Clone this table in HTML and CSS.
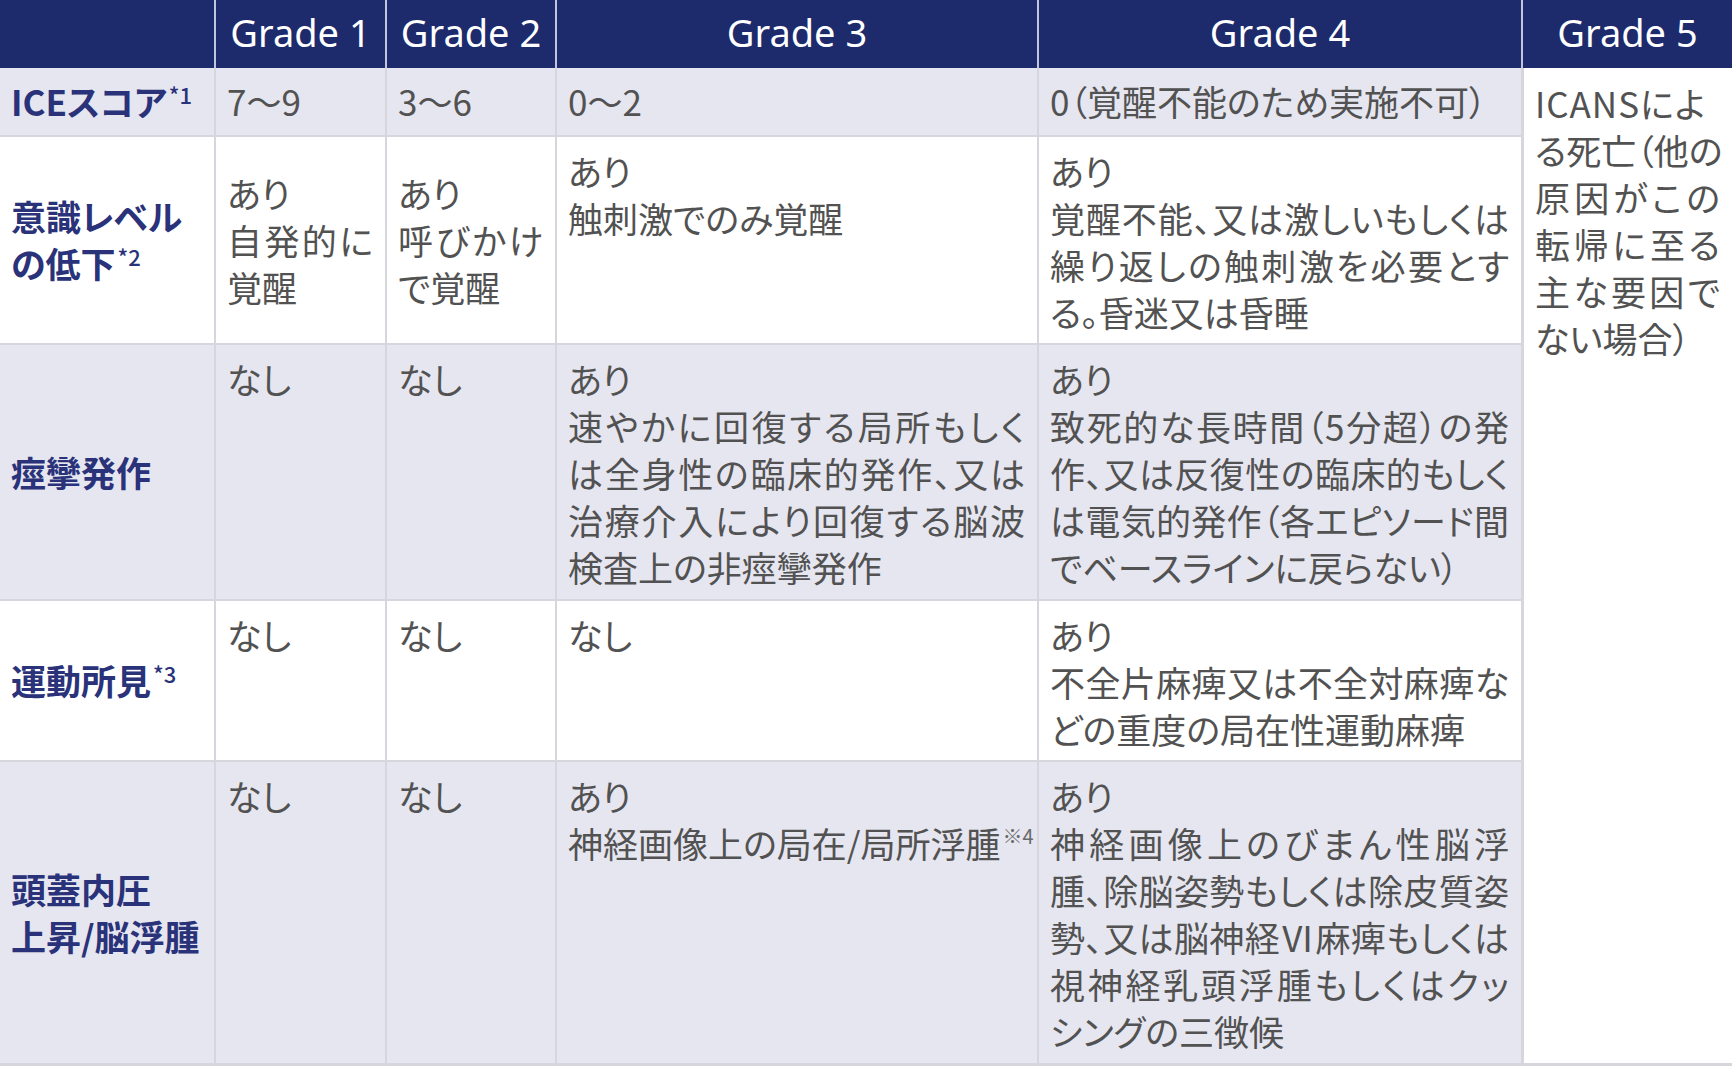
FILE: index.html
```html
<!DOCTYPE html>
<html lang="ja">
<head>
<meta charset="utf-8">
<title>ICANS Grade</title>
<link rel="stylesheet" href="styles.css">
</head>
<body>
<div class="grid">
  <div class="hd"></div>
  <div class="hd">Grade 1</div>
  <div class="hd">Grade 2</div>
  <div class="hd">Grade 3</div>
  <div class="hd">Grade 4</div>
  <div class="hd hd-last">Grade 5</div>

  <div class="c alt rh"><div class="ln">ICEスコア<sup class="sup">*1</sup></div></div>
  <div class="c alt mid"><div class="ln">7〜9</div></div>
  <div class="c alt mid"><div class="ln">3〜6</div></div>
  <div class="c alt mid"><div class="ln">0〜2</div></div>
  <div class="c alt mid"><div class="ln">0（覚醒不能のため実施不可）</div></div>
  <div class="c g5">
    <div class="ln wide">ICANSによ</div>
    <div class="ln j">る死亡（他の</div>
    <div class="ln j">原因がこの</div>
    <div class="ln j">転帰に至る</div>
    <div class="ln j">主な要因で</div>
    <div class="ln">ない場合）</div>
  </div>

  <div class="c rh"><div class="ln">意識レベル</div><div class="ln">の低下<sup class="sup">*2</sup></div></div>
  <div class="c mid"><div class="ln">あり</div><div class="ln j">自発的に</div><div class="ln">覚醒</div></div>
  <div class="c mid"><div class="ln">あり</div><div class="ln j">呼びかけ</div><div class="ln">で覚醒</div></div>
  <div class="c"><div class="ln">あり</div><div class="ln">触刺激でのみ覚醒</div></div>
  <div class="c">
    <div class="ln">あり</div>
    <div class="ln j">覚醒不能、又は激しいもしくは</div>
    <div class="ln j">繰り返しの触刺激を必要とす</div>
    <div class="ln">る。昏迷又は昏睡</div>
  </div>

  <div class="c alt rh"><div class="ln">痙攣発作</div></div>
  <div class="c alt"><div class="ln">なし</div></div>
  <div class="c alt"><div class="ln">なし</div></div>
  <div class="c alt">
    <div class="ln">あり</div>
    <div class="ln j">速やかに回復する局所もしく</div>
    <div class="ln j">は全身性の臨床的発作、又は</div>
    <div class="ln j">治療介入により回復する脳波</div>
    <div class="ln">検査上の非痙攣発作</div>
  </div>
  <div class="c alt">
    <div class="ln">あり</div>
    <div class="ln j">致死的な長時間（5分超）の発</div>
    <div class="ln j">作、又は反復性の臨床的もしく</div>
    <div class="ln j">は電気的発作（各エピソード間</div>
    <div class="ln">でベースラインに戻らない）</div>
  </div>

  <div class="c rh"><div class="ln">運動所見<sup class="sup">*3</sup></div></div>
  <div class="c"><div class="ln">なし</div></div>
  <div class="c"><div class="ln">なし</div></div>
  <div class="c"><div class="ln">なし</div></div>
  <div class="c">
    <div class="ln">あり</div>
    <div class="ln j">不全片麻痺又は不全対麻痺な</div>
    <div class="ln">どの重度の局在性運動麻痺</div>
  </div>

  <div class="c alt rh last"><div class="ln">頭蓋内圧</div><div class="ln">上昇/脳浮腫</div></div>
  <div class="c alt last"><div class="ln">なし</div></div>
  <div class="c alt last"><div class="ln">なし</div></div>
  <div class="c alt last">
    <div class="ln">あり</div>
    <div class="ln">神経画像上の局在/局所浮腫<sup class="sup4">※4</sup></div>
  </div>
  <div class="c alt last">
    <div class="ln">あり</div>
    <div class="ln j">神経画像上のびまん性脳浮</div>
    <div class="ln j">腫、除脳姿勢もしくは除皮質姿</div>
    <div class="ln j">勢、又は脳神経Ⅵ麻痺もしくは</div>
    <div class="ln j">視神経乳頭浮腫もしくはクッ</div>
    <div class="ln">シングの三徴候</div>
  </div>
</div>
</body>
</html>
```

FILE: styles.css
```css
html, body {
  margin: 0;
  padding: 0;
  background: #ffffff;
}

.grid {
  display: grid;
  grid-template-columns: 216px 171px 170px 482px 484px 209px;
  grid-template-rows: 68px 69px 208px 256px 161px 304px;
  width: 1732px;
  font-family: "Noto Sans CJK JP", "Noto Sans", sans-serif;
  font-feature-settings: "palt";
}

.hd {
  box-sizing: border-box;
  background: #1d2a6c;
  color: #ffffff;
  font-family: "Noto Sans", "Noto Sans CJK JP", sans-serif;
  font-size: 38px;
  display: flex;
  align-items: center;
  justify-content: center;
  border-right: 2px solid #c3c6da;
  white-space: nowrap;
  padding-bottom: 4px;
}

.hd-last {
  border-right: none;
}

.c {
  box-sizing: border-box;
  padding: 10px 12px 0 11px;
  font-size: 35px;
  line-height: 47px;
  color: #525252;
  border-right: 2px solid #d6d6dc;
  border-bottom: 2px solid #d6d6dc;
  background: #ffffff;
}

.alt {
  background: #e6e6f0;
}

.rh {
  font-weight: 700;
  color: #2a3279;
  display: flex;
  flex-direction: column;
  justify-content: center;
  padding-top: 0;
  padding-bottom: 2px;
}

.mid {
  display: flex;
  flex-direction: column;
  justify-content: center;
  padding-top: 0;
  padding-bottom: 2px;
}

.g5 {
  grid-column: 6;
  grid-row: 2 / 7;
  border-right: none;
  border-bottom: 3px solid #d6d6dc;
  border-left: 1px solid #d6d6dc;
  padding-top: 11px;
}

.last {
  border-bottom: 3px solid #d6d6dc;
}

.ln {
  white-space: nowrap;
}

.j {
  text-align: justify;
  text-align-last: justify;
}

.wide {
  letter-spacing: 1px;
}

.sup {
  font-size: 22px;
  font-weight: 500;
  vertical-align: 12px;
  line-height: 0;
  margin-left: 2px;
}

.sup4 {
  font-size: 20px;
  vertical-align: 14px;
  line-height: 0;
  margin-left: 2px;
  color: #6a6a6a;
}
```
